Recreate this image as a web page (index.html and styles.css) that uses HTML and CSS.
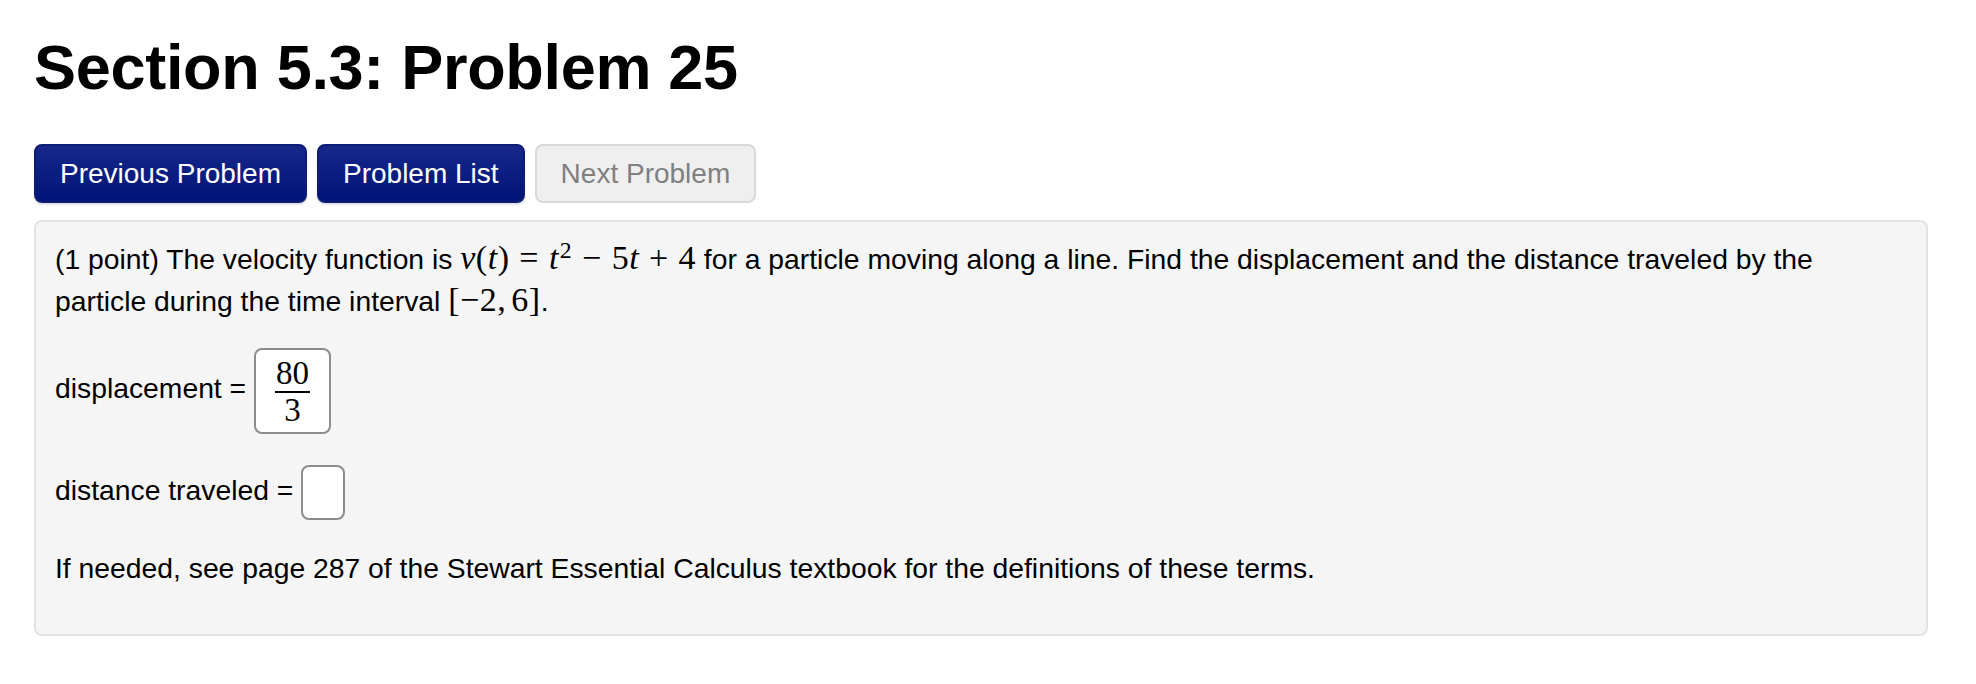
FILE: index.html
```html
<!DOCTYPE html>
<html lang="en">
<head>
<meta charset="utf-8">
<title>Section 5.3: Problem 25</title>
<link rel="stylesheet" href="styles.css">
</head>
<body>
<div class="page">
  <h1 class="title">Section 5.3: Problem 25</h1>
  <nav class="nav">
    <a class="btn btn-primary" href="#">Previous Problem</a>
    <a class="btn btn-primary" href="#">Problem List</a>
    <span class="btn btn-disabled">Next Problem</span>
  </nav>
  <div class="problem">
    <p class="stmt">(1 point) The velocity function is <span class="m"><i>v</i>(<i>t</i>)<span class="rel">=</span><i>t</i><sup>2</sup><span class="bin">−</span>5<i>t</i><span class="bin">+</span>4</span> for a particle moving along a line. Find the displacement and the distance traveled by the particle during the time interval <span class="m">[−2,<span class="thin"></span>6]</span>.</p>
    <div class="row row-disp">displacement = <span class="ans ans-filled"><span class="frac"><span class="num">80</span><span class="den">3</span></span></span></div>
    <div class="row row-dist">distance traveled = <span class="ans ans-empty"></span></div>
    <p class="note">If needed, see page 287 of the Stewart Essential Calculus textbook for the definitions of these terms.</p>
  </div>
</div>
</body>
</html>
```

FILE: styles.css
```css
html, body {
  margin: 0;
  padding: 0;
  background: #ffffff;
}
body {
  font-family: "Liberation Sans", Arial, Helvetica, sans-serif;
  font-size: 28.3px;
  line-height: 42px;
  color: #000;
}
.page {
  padding: 0 47px 0 34px;
}
.title {
  margin: 33px 0 0 0;
  font-size: 63px;
  line-height: 69px;
  font-weight: bold;
  letter-spacing: -0.3px;
}
.nav {
  display: flex;
  gap: 10px;
  margin-top: 42px;
}
.btn {
  box-sizing: border-box;
  height: 59px;
  display: inline-flex;
  align-items: center;
  padding: 0 24px;
  border: 2px solid transparent;
  border-radius: 8px;
  font-size: 28px;
  text-decoration: none;
  white-space: nowrap;
}
.btn-primary {
  color: #fff;
  background: linear-gradient(#17288a, #001378);
  border-color: #0d1c75;
  box-shadow: 0 2px 2px rgba(0, 0, 0, 0.12);
}
.btn-disabled {
  color: #808080;
  background: #efefef;
  border-color: #d9d9d9;
}
.problem {
  margin-top: 17px;
  width: 1894px;
  box-sizing: border-box;
  padding: 16px 40px 45px 19px;
  background: #f5f5f5;
  border: 2px solid #e3e3e3;
  border-radius: 8px;
}
.stmt {
  margin: 0 0 26px 0;
}
.m {
  font-family: "Liberation Serif", "Times New Roman", serif;
  font-size: 34px;
  line-height: 30px;
  letter-spacing: 0.5px;
}
.m i {
  font-style: italic;
}
.m sup {
  font-size: 0.7em;
  line-height: 0;
  vertical-align: 0.45em;
  margin-left: 1px;
}
.rel {
  margin: 0 0.29em;
}
.bin {
  margin: 0 0.29em;
}
.thin {
  display: inline-block;
  width: 0.15em;
}
.row {
  margin: 0 0 31px 0;
}
.row-dist {
  margin-bottom: 27px;
}
.ans {
  display: inline-block;
  box-sizing: border-box;
  vertical-align: middle;
  background: #fff;
  border: 2px solid #8c8c8c;
  border-radius: 8px;
}
.ans-filled {
  width: 77px;
  height: 86px;
  padding-top: 3px;
  text-align: center;
}
.ans-empty {
  width: 44px;
  height: 55px;
}
.frac {
  display: inline-flex;
  flex-direction: column;
  align-items: stretch;
  font-family: "Liberation Serif", "Times New Roman", serif;
  font-size: 33px;
  line-height: 29px;
  text-align: center;
}
.num {
  padding: 0 1px 3px 1px;
  border-bottom: 2px solid #000;
}
.den {
  padding-top: 3px;
}
.note {
  margin: 0;
}
```
